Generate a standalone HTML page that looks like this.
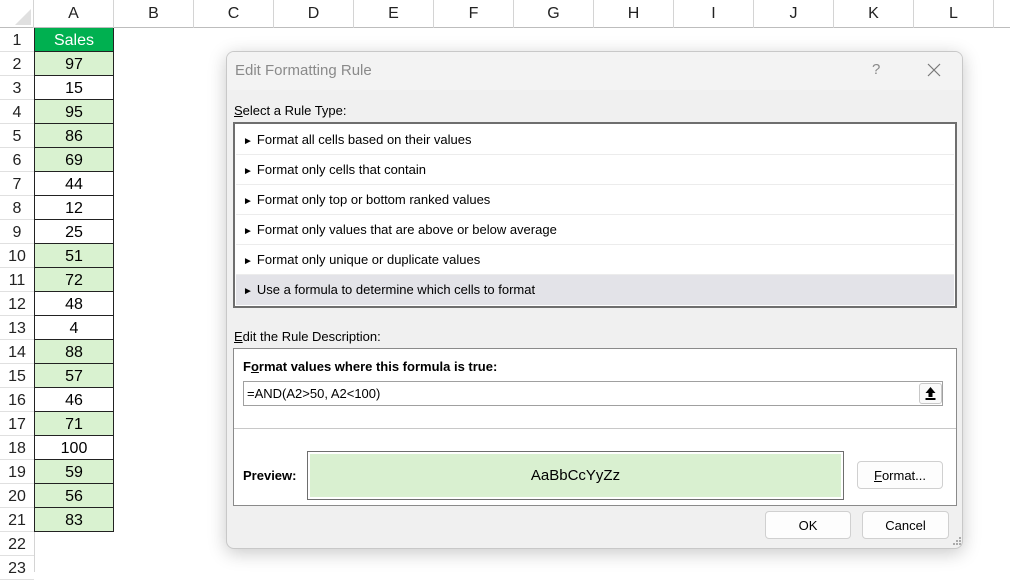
<!DOCTYPE html>
<html><head><style>
*{margin:0;padding:0;box-sizing:border-box}
body{width:1010px;height:572px;overflow:hidden;background:#fff;font-family:"Liberation Sans",sans-serif;position:relative}
.a{position:absolute}
.ch{position:absolute;top:0;height:28px;line-height:28px;text-align:center;font-size:16px;color:#222;border-right:1px solid #d4d4d4}
.rh{position:absolute;left:0;width:34px;height:24px;line-height:26px;text-align:center;font-size:16px;color:#222;border-bottom:1px solid #e0e0e0}
.c{position:absolute;left:34px;width:80px;height:24px;line-height:25px;text-align:center;font-size:16px;color:#000;border:1px solid #222;border-top:none}
.g{background:#d9f2d0}
.dl{font-size:13px;color:#000}
.li{position:absolute;left:1px;right:1px;height:30px;line-height:30px;padding-left:7px;font-size:13px;border-bottom:1px solid #ececec}
.li span{font-size:10px;margin-right:4px}
.btn{position:absolute;height:28px;line-height:27px;text-align:center;font-size:13px;background:#fdfdfd;border:1px solid #d0d0d0;border-radius:4px}
</style></head><body>
<div class="a" style="left:0;top:0;width:1010px;height:28px;border-bottom:1px solid #bdbdbd;background:#fff"></div>
<div class="a" style="left:0;top:0;width:34px;height:28px;border-right:1px solid #d4d4d4"></div>
<svg class="a" style="left:14px;top:8px" width="18" height="18"><polygon points="17,1 17,17 1,17" fill="#e0e0e0"/></svg>
<div class="ch" style="left:34px;width:80px">A</div>
<div class="ch" style="left:114px;width:80px">B</div>
<div class="ch" style="left:194px;width:80px">C</div>
<div class="ch" style="left:274px;width:80px">D</div>
<div class="ch" style="left:354px;width:80px">E</div>
<div class="ch" style="left:434px;width:80px">F</div>
<div class="ch" style="left:514px;width:80px">G</div>
<div class="ch" style="left:594px;width:80px">H</div>
<div class="ch" style="left:674px;width:80px">I</div>
<div class="ch" style="left:754px;width:80px">J</div>
<div class="ch" style="left:834px;width:80px">K</div>
<div class="ch" style="left:914px;width:80px">L</div>
<div class="a" style="left:34px;top:28px;width:1px;height:544px;background:#d4d4d4"></div>
<div id="rows"></div>
<script>
var v=["Sales",97,15,95,86,69,44,12,25,51,72,48,4,88,57,46,71,100,59,56,83];
var h="";
for(var i=0;i<23;i++){var t=28+i*24;h+='<div class="rh" style="top:'+t+'px">'+(i+1)+'</div>';
if(i<21){var x=v[i];var cl=i==0?'':(x>50&&x<100?' g':'');var st=i==0?'background:#00b050;color:#fff;border-top:none;':'';
h+='<div class="c'+cl+'" style="top:'+t+'px;'+st+'">'+x+'</div>';}}
document.getElementById('rows').innerHTML=h;
</script>
<div class="a" style="left:226px;top:51px;width:737px;height:498px;background:#f0f0f0;border:1px solid #c8c8c8;border-radius:8px;box-shadow:0 4px 18px rgba(0,0,0,.22);overflow:hidden">
 <div class="a" style="left:0;top:0;width:737px;height:38px;background:#f3f3f3"></div>
 <div class="a" style="left:8px;top:10px;font-size:15px;color:#8a8a8a">Edit Formatting Rule</div>
 <div class="a" style="left:645px;top:9px;font-size:15px;color:#8a8a8a">?</div>
 <svg class="a" style="left:700px;top:11px" width="14" height="14"><path d="M1 1L13 13M13 1L1 13" stroke="#777" stroke-width="1.2"/></svg>
 <div class="a dl" style="left:7px;top:51px"><u>S</u>elect a Rule Type:</div>
 <div class="a" style="left:6px;top:70px;width:724px;height:186px;background:#fff;border:2px solid #6e6e6e">
  <div class="li" style="top:1px"><span>►</span>Format all cells based on their values</div>
  <div class="li" style="top:31px"><span>►</span>Format only cells that contain</div>
  <div class="li" style="top:61px"><span>►</span>Format only top or bottom ranked values</div>
  <div class="li" style="top:91px"><span>►</span>Format only values that are above or below average</div>
  <div class="li" style="top:121px"><span>►</span>Format only unique or duplicate values</div>
  <div class="li" style="top:151px;background:#e3e3e8;border:none"><span>►</span>Use a formula to determine which cells to format</div>
 </div>
 <div class="a dl" style="left:7px;top:277px"><u>E</u>dit the Rule Description:</div>
 <div class="a" style="left:6px;top:296px;width:724px;height:158px;background:#fff;border:1px solid #8a8a8a">
  <div class="a dl" style="left:9px;top:10px;font-weight:bold">F<u>o</u>rmat values where this formula is true:</div>
  <div class="a" style="left:9px;top:32px;width:700px;height:25px;border:1px solid #a0a0a0;font-size:13px;line-height:23px;padding-left:3px">=AND(A2&gt;50, A2&lt;100)</div>
  <div class="a" style="left:685px;top:34px;width:23px;height:21px;border:1px solid #c8c8c8;border-radius:3px;background:#fafafa"></div>
  <svg class="a" style="left:690px;top:37px" width="13" height="15"><path d="M6.5 1L1.5 7H4.5V11H8.5V7H11.5Z" fill="#000"/><rect x="1.5" y="12" width="10" height="2" fill="#000"/></svg>
  <div class="a" style="left:0;top:79px;width:722px;height:1px;background:#c8c8c8"></div>
  <div class="a dl" style="left:9px;top:119px;font-weight:bold">Preview:</div>
  <div class="a" style="left:73px;top:102px;width:537px;height:49px;border:1px solid #6e6e6e;background:#fff;padding:2px"><div style="width:100%;height:100%;background:#d9f0d0;text-align:center;line-height:43px;font-size:15px">AaBbCcYyZz</div></div>
  <div class="btn" style="left:623px;top:112px;width:86px"><u>F</u>ormat...</div>
 </div>
 <div class="btn" style="left:538px;top:459px;width:86px">OK</div>
 <div class="btn" style="left:635px;top:459px;width:87px">Cancel</div>
 <svg class="a" style="left:725px;top:484px" width="10" height="10" fill="#aaa"><rect x="7" y="1" width="2" height="2"/><rect x="4" y="4" width="2" height="2"/><rect x="7" y="4" width="2" height="2"/><rect x="1" y="7" width="2" height="2"/><rect x="4" y="7" width="2" height="2"/><rect x="7" y="7" width="2" height="2"/></svg>
</div>
</body></html>
